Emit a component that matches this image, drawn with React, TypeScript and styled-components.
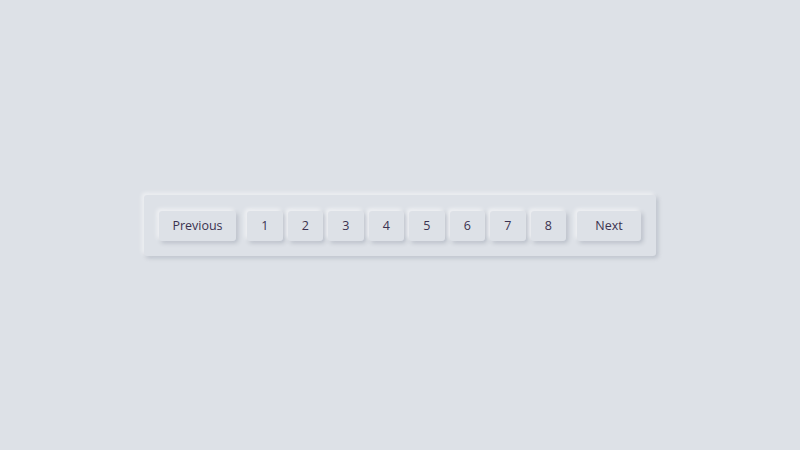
import styled, { createGlobalStyle } from "styled-components";

const GlobalStyle = createGlobalStyle`
  html, body {
    margin: 0;
    padding: 0;
    background: #dde1e7;
  }
  body {
    font-family: "Open Sans", "Liberation Sans", sans-serif;
  }
`

const Page = styled.div`
  width: 800px;
  height: 450px;
  display: flex;
  align-items: center;
  justify-content: center;
  background: #dde1e7;
`

const Bar = styled.div`
  display: flex;
  align-items: center;
  padding: 16px 15px 15px 15px;
  background: #dde1e7;
  border-radius: 3px;
  box-shadow: -2px -2px 4px rgba(255, 255, 255, 0.6), 2px 2px 4px rgba(94, 104, 121, 0.28);
`

const Numbers = styled.div`
  display: flex;
  gap: 5px;
  margin: 0 11px;
`

const PageButton = styled.button<{ $w: number }>`
  width: ${p => p.$w}px;
  height: 30px;
  border: none;
  border-radius: 3px;
  background: #dde1e7;
  color: #3b3250;
  font-family: "Open Sans", "Liberation Sans", sans-serif;
  font-size: 12.5px;
  padding: 0 0 1px 0;
  cursor: pointer;
  box-shadow: -2px -2px 4px rgba(255, 255, 255, 0.65), 2px 2px 4px rgba(94, 104, 121, 0.3);
`

const App = () => {
  const pages = [1, 2, 3, 4, 5, 6, 7, 8]
  return (
    <Page>
      <GlobalStyle />
      <Bar>
        <PageButton $w={77}>Previous</PageButton>
        <Numbers>
          {pages.map(n => (
            <PageButton key={n} $w={35.5}>{n}</PageButton>
          ))}
        </Numbers>
        <PageButton $w={64}>Next</PageButton>
      </Bar>
    </Page>
  );
}

export default App;
